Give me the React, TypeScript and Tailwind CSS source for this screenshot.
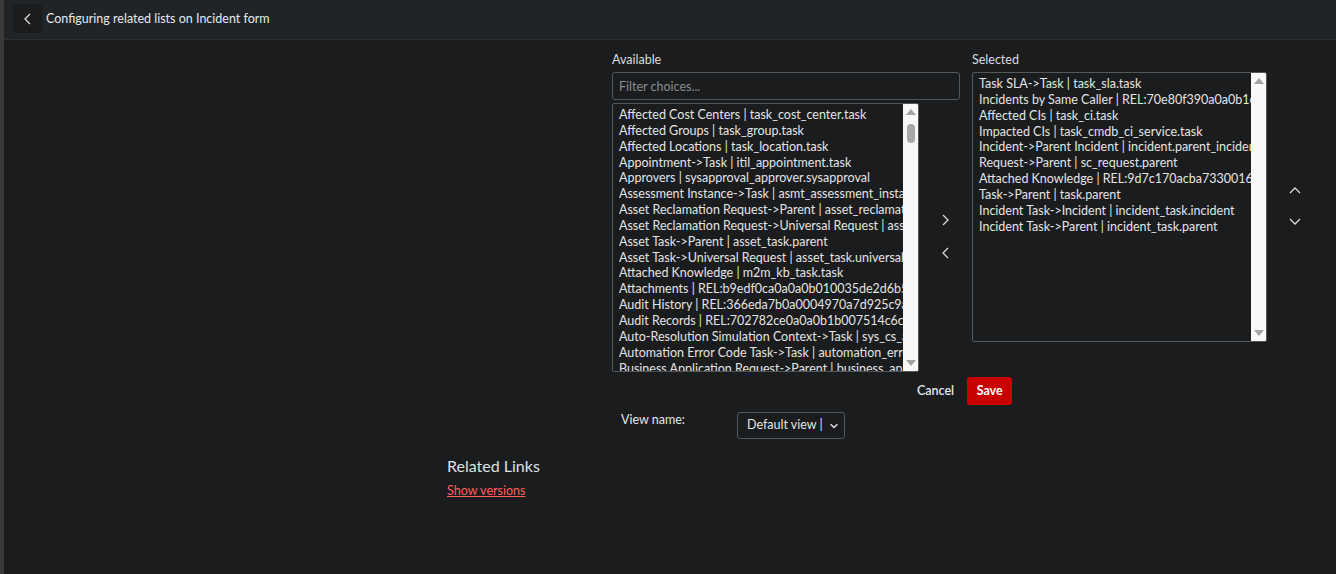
import { ChevronDown } from 'lucide-react';

const available = [
  'Affected Cost Centers | task_cost_center.task',
  'Affected Groups | task_group.task',
  'Affected Locations | task_location.task',
  'Appointment->Task | itil_appointment.task',
  'Approvers | sysapproval_approver.sysapproval',
  'Assessment Instance->Task | asmt_assessment_instance.task',
  'Asset Reclamation Request->Parent | asset_reclamation_request.parent',
  'Asset Reclamation Request->Universal Request | asset_reclamation_request.universal_request',
  'Asset Task->Parent | asset_task.parent',
  'Asset Task->Universal Request | asset_task.universal_request',
  'Attached Knowledge | m2m_kb_task.task',
  'Attachments | REL:b9edf0ca0a0a0b010035de2d6b579a03',
  'Audit History | REL:366eda7b0a0004970a7d925c9ac1e8b2',
  'Audit Records | REL:702782ce0a0a0b1b007514c6c3d1b8e0',
  'Auto-Resolution Simulation Context->Task | sys_cs_auto_resolution_context.task',
  'Automation Error Code Task->Task | automation_error_code_task.task',
  'Business Application Request->Parent | business_app_request.parent',
];

const selected = [
  'Task SLA->Task | task_sla.task',
  'Incidents by Same Caller | REL:70e80f390a0a0b1c00b1a2c3d4e5f6a7',
  'Affected CIs | task_ci.task',
  'Impacted CIs | task_cmdb_ci_service.task',
  'Incident->Parent Incident | incident.parent_incident',
  'Request->Parent | sc_request.parent',
  'Attached Knowledge | REL:9d7c170acba7330016400f5e5d7b8c9a',
  'Task->Parent | task.parent',
  'Incident Task->Incident | incident_task.incident',
  'Incident Task->Parent | incident_task.parent',
];

function Chevron({ dir }: { dir: 'left' | 'right' | 'up' | 'down' }) {
  const paths = {
    left: 'M7 1 L2 6 L7 11',
    right: 'M2 1 L7 6 L2 11',
    up: 'M1 7 L6 2 L11 7',
    down: 'M1 2 L6 7 L11 2',
  };
  const horiz = dir === 'left' || dir === 'right';
  return (
    <svg width={horiz ? 9 : 12} height={horiz ? 12 : 9} viewBox={horiz ? '0 0 9 12' : '0 0 12 9'} fill="none">
      <path d={paths[dir]} stroke="#d8dadc" strokeWidth="1.3" />
    </svg>
  );
}

function Scrollbar({ thumb }: { thumb?: boolean }) {
  return (
    <div className="w-[15px] shrink-0 bg-[#f8f8f8] flex flex-col items-center py-[5px]">
      <div className="w-0 h-0 border-x-[5px] border-x-transparent border-b-[6px] border-b-[#a3a3a3]" />
      {thumb && <div className="mt-[9px] w-[8px] h-[19px] rounded-full bg-[#a8a8a8]" />}
      <div className="flex-1" />
      <div className="w-0 h-0 border-x-[5px] border-x-transparent border-t-[6px] border-t-[#a3a3a3]" />
    </div>
  );
}

function ListBox({ items, className, thumb }: { items: string[]; className: string; thumb?: boolean }) {
  return (
    <div className={`flex border border-[#54575a] rounded-[2px] overflow-hidden ${className}`}>
      <div className="flex-1 min-w-0 overflow-hidden pl-[6px] pt-[3px] text-[12.5px] leading-[15.85px] text-[#e4e4e4]">
        {items.map((it) => (
          <div key={it} className="whitespace-nowrap">
            {it}
          </div>
        ))}
      </div>
      <Scrollbar thumb={thumb} />
    </div>
  );
}

export default function App() {
  return (
    <div className="flex h-[574px] w-[1336px] bg-[#1b1c1e] font-['Lato',sans-serif] text-[#e4e4e4]">
      <div className="w-[4px] shrink-0 bg-[#3a3a3a]" />
      <div className="flex-1 flex flex-col">
        <header className="h-[40px] shrink-0 bg-[#212426] border-b border-[#2c2f31] flex items-center pl-[9px]">
          <button className="w-[29px] h-[29px] mb-[2px] rounded-[4px] bg-[#1b1c1e] flex items-center justify-center">
            <Chevron dir="left" />
          </button>
          <span className="ml-[4px] mb-[1px] text-[12.5px] text-[#e6e8ea]">Configuring related lists on Incident form</span>
        </header>

        <main className="flex-1 pt-[10px]">
          <div className="flex ml-[608px]">
            <div className="w-[348px]">
              <div className="h-[22px] text-[12.5px] leading-[20px] text-[#dcdcdc]">Available</div>
              <input
                placeholder="Filter choices..."
                className="w-[348px] h-[28px] rounded-[3px] border border-[#54575a] bg-[#1b1c1e] px-[6px] text-[12.5px] text-[#e4e4e4] placeholder:text-[#8a8c8e] focus:outline-none"
              />
              <div className="flex mt-[3px]">
                <ListBox items={available} className="w-[307px] h-[269px]" thumb />
                <div className="flex-1 flex flex-col items-center pt-[111px] gap-[21px] pl-[12px]">
                  <Chevron dir="right" />
                  <Chevron dir="left" />
                </div>
              </div>
            </div>
            <div className="ml-[12px]">
              <div className="h-[22px] text-[12.5px] leading-[20px] text-[#dcdcdc]">Selected</div>
              <ListBox items={selected} className="w-[295px] h-[270px]" />
            </div>
            <div className="flex flex-col ml-[22px] pt-[136px] gap-[22px]">
              <Chevron dir="up" />
              <Chevron dir="down" />
            </div>
          </div>

          <div className="flex items-center ml-[913px] mt-[5px]">
            <button className="text-[12.5px] text-[#e6e8ea] font-semibold">Cancel</button>
            <button className="ml-[13px] h-[28px] w-[45px] rounded-[3px] bg-[#c80000] text-[12.5px] font-bold text-white">
              Save
            </button>
          </div>

          <div className="flex items-start ml-[617px] mt-[7px]">
            <span className="w-[116px] leading-[15px] text-[12.5px] text-[#e4e4e4]">View name:</span>
            <div className="flex items-center h-[27px] w-[108px] rounded-[3px] border border-[#54575a] pl-[9px] text-[12.5px] text-[#e4e4e4]">
              <span>Default view |</span>
              <ChevronDown className="ml-auto mr-[4px] h-[12px] w-[12px]" strokeWidth={3} color="#d8dadc" />
            </div>
          </div>

          <div className="ml-[443px] mt-[15px]">
            <div className="text-[16px] text-[#dfe1e3]">Related Links</div>
            <a className="block mt-[4px] text-[12.5px] text-[#ff5c5c] underline">Show versions</a>
          </div>
        </main>
      </div>
    </div>
  );
}
